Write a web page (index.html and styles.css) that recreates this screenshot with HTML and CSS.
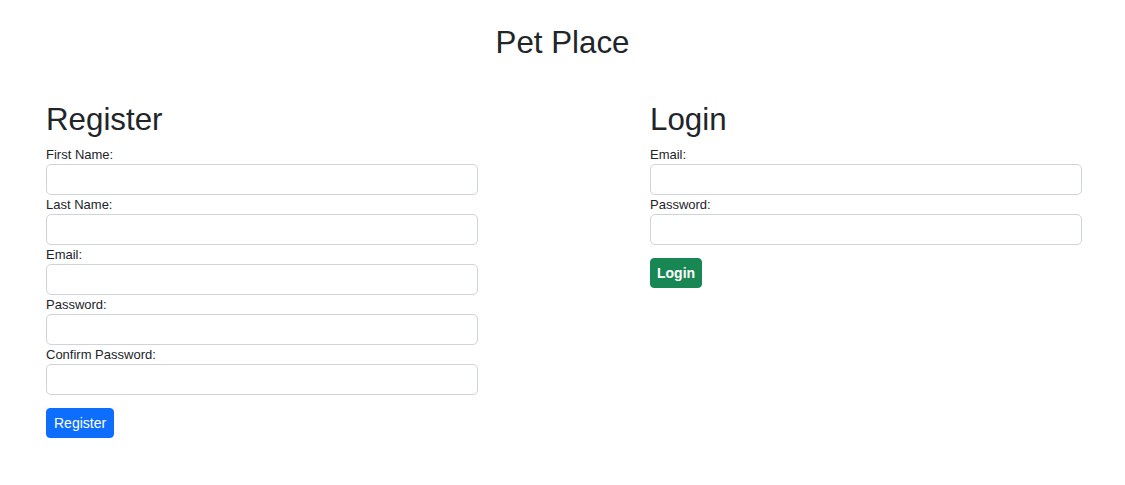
FILE: index.html
```
<!DOCTYPE html>
<html lang="en">
<head>
<meta charset="utf-8">
<title>Pet Place</title>
<link rel="stylesheet" href="styles.css">
</head>
<body>
<h1 class="title">Pet Place</h1>
<div class="columns">
  <section class="panel">
    <h2 class="heading">Register</h2>
    <form class="form">
      <label class="label" for="fn">First Name:</label>
      <input class="input" id="fn" type="text">
      <label class="label" for="ln">Last Name:</label>
      <input class="input" id="ln" type="text">
      <label class="label" for="re">Email:</label>
      <input class="input" id="re" type="email">
      <label class="label" for="rp">Password:</label>
      <input class="input" id="rp" type="password">
      <label class="label" for="rc">Confirm Password:</label>
      <input class="input" id="rc" type="password">
      <button class="btn btn-primary" type="button">Register</button>
    </form>
  </section>
  <section class="panel">
    <h2 class="heading">Login</h2>
    <form class="form">
      <label class="label" for="le">Email:</label>
      <input class="input" id="le" type="email">
      <label class="label" for="lp">Password:</label>
      <input class="input" id="lp" type="password">
      <button class="btn btn-success" type="button">Login</button>
    </form>
  </section>
</div>
</body>
</html>
```
FILE: styles.css
```
* { box-sizing: border-box; }
html, body { margin: 0; padding: 0; background: #fff; }
body {
  font-family: "Liberation Sans", Arial, sans-serif;
  color: #212529;
  font-size: 16px;
  line-height: 1.5;
}
.title {
  margin: 24px 0 0;
  font-size: 31.3px;
  font-weight: 400;
  line-height: 1.2;
  text-align: center;
}
.columns {
  display: grid;
  grid-template-columns: 432px 432px;
  column-gap: 172px;
  padding: 0 46px;
  margin-top: 39px;
}
.heading {
  margin: 0 0 7px;
  font-size: 31.3px;
  font-weight: 400;
  line-height: 1.2;
}
.form {
  display: flex;
  flex-direction: column;
  align-items: flex-start;
}
.label {
  display: block;
  font-size: 13px;
  line-height: 19px;
}
.input {
  display: block;
  width: 432px;
  height: 31px;
  margin: 0;
  padding: 4px 8px;
  font-family: inherit;
  font-size: 14px;
  border: 1px solid #ced4da;
  border-radius: 5px;
  background: #fff;
}
.btn {
  margin-top: 13px;
  height: 30px;
  padding: 0 7px;
  font-family: inherit;
  font-size: 14px;
  line-height: 28px;
  color: #fff;
  border: 1px solid transparent;
  border-radius: 4px;
  cursor: pointer;
}
.btn-primary { background: #0d6efd; border-color: #0d6efd; }
.btn-success { background: #198754; border-color: #198754; font-weight: 700; padding: 0 6px; }
```
